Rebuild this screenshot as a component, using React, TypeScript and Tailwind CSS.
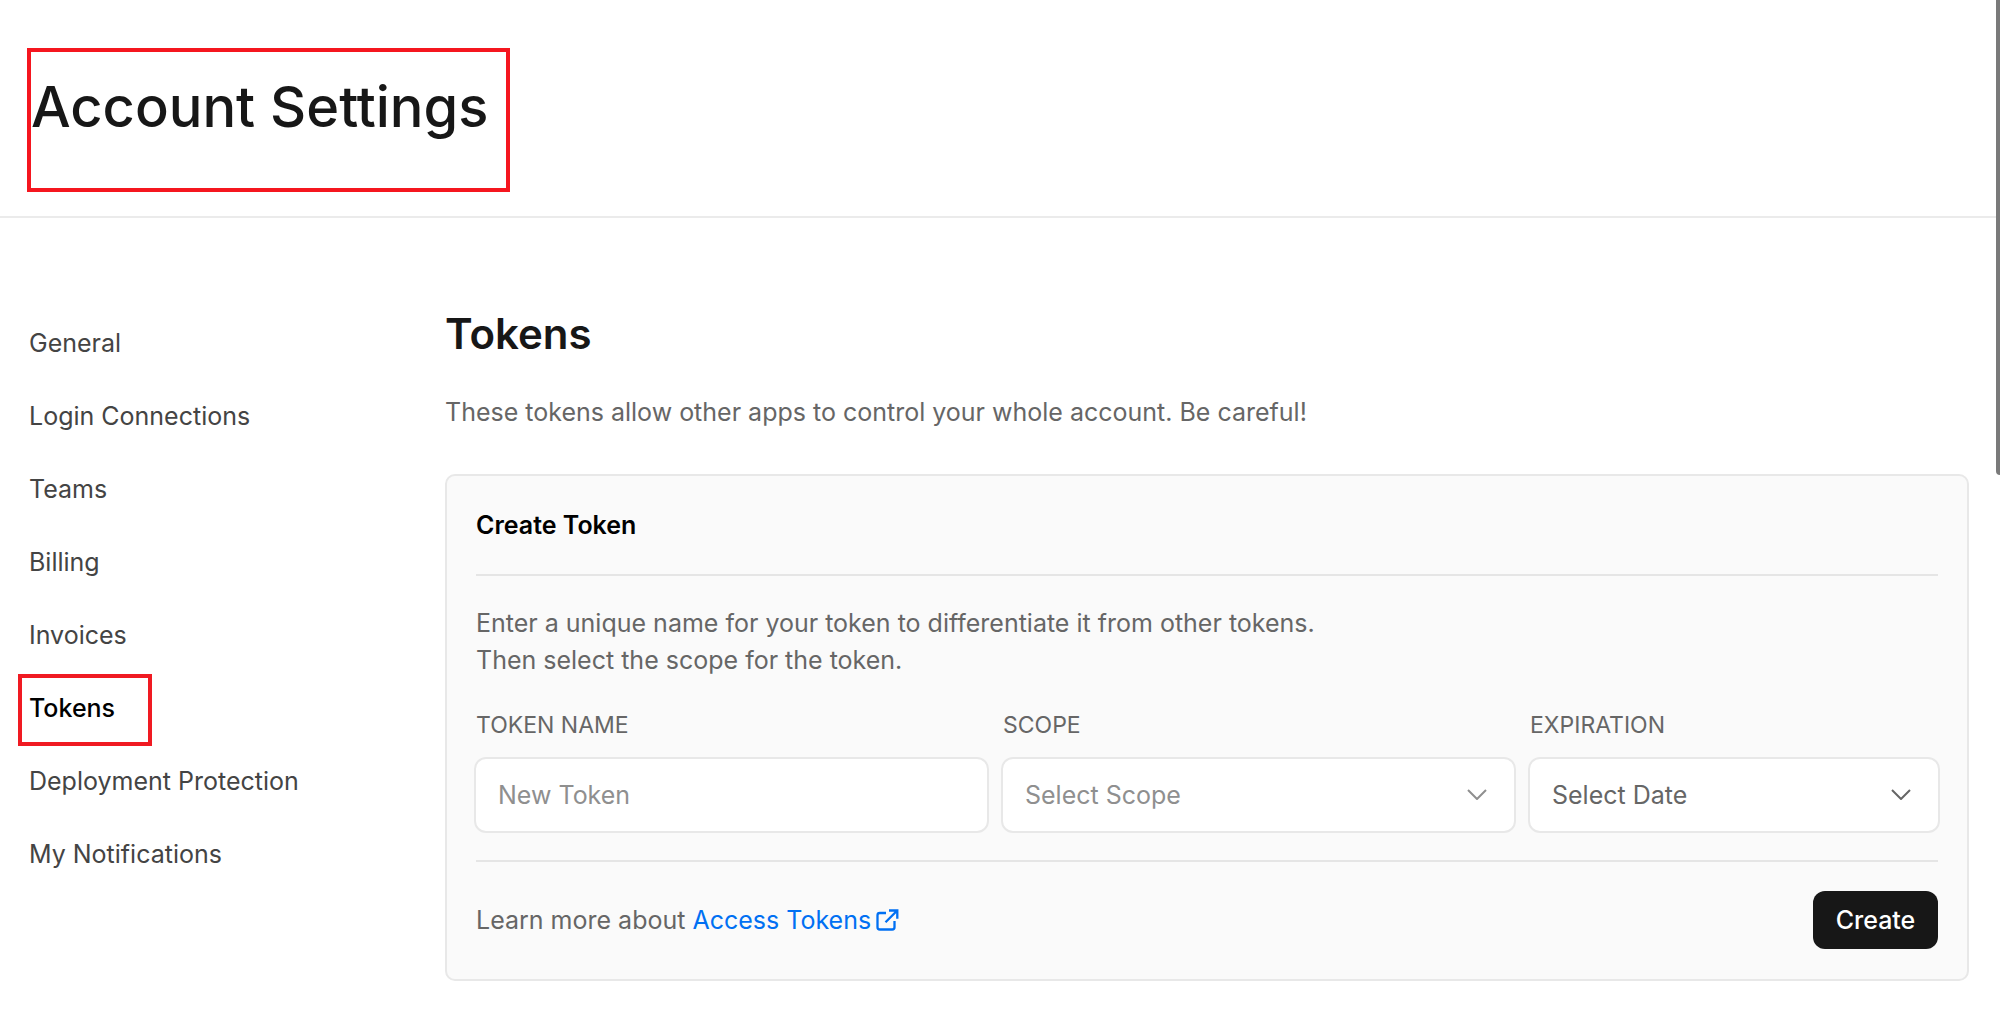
import React from "react";

const navItems = [
  "General",
  "Login Connections",
  "Teams",
  "Billing",
  "Invoices",
  "Tokens",
  "Deployment Protection",
  "My Notifications",
];

const fieldClass =
  "h-[76px] w-full appearance-none rounded-xl border-2 border-[#e8e8e8] bg-white pl-[22px] pr-14 text-[25px] outline-none";

function Chevron({ className }: { className: string }) {
  return (
    <svg
      className={`pointer-events-none absolute right-7 top-[27px] h-[22px] w-[22px] ${className}`}
      viewBox="0 0 22 22"
      fill="none"
      stroke="currentColor"
      strokeWidth="2"
      strokeLinejoin="round"
      aria-hidden="true"
    >
      <path d="M2 6 11 15 20 6" />
    </svg>
  );
}

function ExternalIcon() {
  return (
    <svg
      className="ml-1 h-6 w-6"
      viewBox="0 0 24 24"
      fill="none"
      stroke="currentColor"
      strokeWidth="2.3"
      aria-hidden="true"
    >
      <path d="M11 5H4.8a2.3 2.3 0 0 0-2.3 2.3v11.9a2.3 2.3 0 0 0 2.3 2.3h12.4a2.3 2.3 0 0 0 2.3-2.3V13" />
      <path d="M14 2.5h8.3v8.3M22 2.8 10.5 14.3" />
    </svg>
  );
}

export default function App() {
  return (
    <div className="relative min-h-screen overflow-hidden bg-white font-['Inter',sans-serif] text-[25px] leading-9 text-[#666666]">
      <header className="border-b-2 border-[#ebebeb] px-[27px] pb-6 pt-12">
        <h1 className="flex h-36 w-[483px] items-start whitespace-nowrap border-4 border-[#f5161f] pt-[23px] text-[56px] font-medium leading-[64px] text-[#171717]">
          Account Settings
        </h1>
      </header>

      <div className="flex pr-[31px] pt-[88px]">
        <nav className="w-[445px] shrink-0" aria-label="Account settings">
          <ul>
            {navItems.map((item) => (
              <li key={item} className="flex h-[73px] items-center pl-[18px]">
                {item === "Tokens" ? (
                  <a
                    href="#tokens"
                    aria-current="page"
                    className="mt-1 flex h-[72px] w-[134px] border-4 border-[#f01a22] pl-[7px] pt-[12px] font-medium text-black"
                  >
                    {item}
                  </a>
                ) : (
                  <a href="#" className="pl-[11px] text-[#444444]">
                    {item}
                  </a>
                )}
              </li>
            ))}
          </ul>
        </nav>

        <main className="min-w-0 flex-1">
          <h2 className="text-[42px] font-semibold leading-[56px] text-[#171717]">Tokens</h2>
          <p className="mt-8">
            These tokens allow other apps to control your whole account. Be careful!
          </p>

          <form
            className="mt-11 rounded-[10px] border-2 border-[#e8e8e8] bg-[#fafafa] px-[29px] pb-[30px]"
            onSubmit={(e) => e.preventDefault()}
          >
            <h3 className="border-b-2 border-[#e5e5e5] pb-[31px] pt-[31px] font-semibold text-black">
              Create Token
            </h3>
            <p className="mt-[29px] leading-[37px]">
              Enter a unique name for your token to differentiate it from other tokens.
              <br />
              Then select the scope for the token.
            </p>

            <div className="-mx-0.5 mt-7 grid grid-cols-[5fr_5fr_4fr] gap-3">
              <div>
                <label htmlFor="token-name" className="block pl-0.5 text-[23px] leading-9">
                  TOKEN NAME
                </label>
                <input
                  id="token-name"
                  type="text"
                  placeholder="New Token"
                  className={`mt-3.5 block placeholder:text-[#8f8f8f] ${fieldClass}`}
                />
              </div>
              <div>
                <label htmlFor="scope" className="block pl-0.5 text-[23px] leading-9">
                  SCOPE
                </label>
                <div className="relative mt-3.5">
                  <select id="scope" className={`block text-[#8f8f8f] ${fieldClass}`}>
                    <option>Select Scope</option>
                  </select>
                  <Chevron className="text-[#8f8f8f]" />
                </div>
              </div>
              <div>
                <label htmlFor="expiration" className="block pl-0.5 text-[23px] leading-9">
                  EXPIRATION
                </label>
                <div className="relative mt-3.5">
                  <select id="expiration" className={`block text-[#666666] ${fieldClass}`}>
                    <option>Select Date</option>
                  </select>
                  <Chevron className="text-[#666666]" />
                </div>
              </div>
            </div>

            <div className="mt-[27px] flex items-center justify-between border-t-2 border-[#e5e5e5] pt-[29px]">
              <p className="flex items-center">
                Learn more about&nbsp;
                <a href="#access-tokens" className="flex items-center text-[#0070f3]">
                  Access Tokens
                  <ExternalIcon />
                </a>
              </p>
              <button
                type="submit"
                className="h-[58px] w-[125px] rounded-xl bg-[#171717] text-center font-medium text-white"
              >
                Create
              </button>
            </div>
          </form>
        </main>
      </div>

      <div className="absolute right-0 top-0 h-[475px] w-1 rounded-bl bg-[#7a7a7a]" />
    </div>
  );
}
